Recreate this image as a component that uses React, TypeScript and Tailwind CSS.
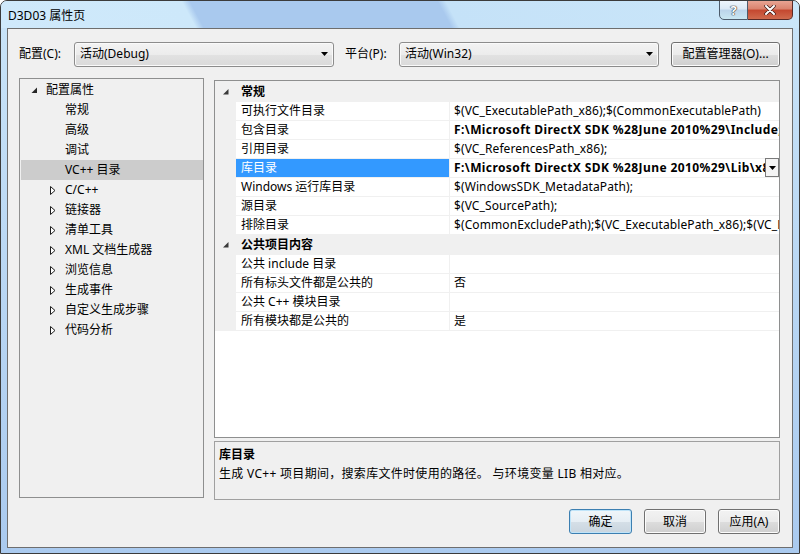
import React from "react";

type TreeItem = { label: string; root?: boolean; collapsed?: boolean; selected?: boolean };

const treeItems: TreeItem[] = [
  { label: "配置属性", root: true },
  { label: "常规" },
  { label: "高级" },
  { label: "调试" },
  { label: "VC++ 目录", selected: true },
  { label: "C/C++", collapsed: true },
  { label: "链接器", collapsed: true },
  { label: "清单工具", collapsed: true },
  { label: "XML 文档生成器", collapsed: true },
  { label: "浏览信息", collapsed: true },
  { label: "生成事件", collapsed: true },
  { label: "自定义生成步骤", collapsed: true },
  { label: "代码分析", collapsed: true },
];

type Prop = { name: string; value?: string; bold?: boolean; selected?: boolean };

const groups: { title: string; props: Prop[] }[] = [
  {
    title: "常规",
    props: [
      { name: "可执行文件目录", value: "$(VC_ExecutablePath_x86);$(CommonExecutablePath)" },
      {
        name: "包含目录",
        value: "F:\\Microsoft DirectX SDK %28June 2010%29\\Include;$(IncludePath)",
        bold: true,
      },
      { name: "引用目录", value: "$(VC_ReferencesPath_x86);" },
      {
        name: "库目录",
        value: "F:\\Microsoft DirectX SDK %28June 2010%29\\Lib\\x86;$(LibraryPath)",
        bold: true,
        selected: true,
      },
      { name: "Windows 运行库目录", value: "$(WindowsSDK_MetadataPath);" },
      { name: "源目录", value: "$(VC_SourcePath);" },
      { name: "排除目录", value: "$(CommonExcludePath);$(VC_ExecutablePath_x86);$(VC_LibraryPath_x86)" },
    ],
  },
  {
    title: "公共项目内容",
    props: [
      { name: "公共 include 目录" },
      { name: "所有标头文件都是公共的", value: "否" },
      { name: "公共 C++ 模块目录" },
      { name: "所有模块都是公共的", value: "是" },
    ],
  },
];

const ExpandedGlyph = () => (
  <svg width="7" height="7" viewBox="0 0 7 7">
    <path d="M6 0.5 L6 6 L0.5 6 Z" fill="#262626" />
  </svg>
);

const CollapsedGlyph = () => (
  <svg width="6" height="9" viewBox="0 0 6 9">
    <path d="M0.5 0.5 L5 4.5 L0.5 8.5 Z" fill="#fff" stroke="#1e1e1e" strokeWidth="1" />
  </svg>
);

const DownArrow = () => (
  <svg width="7" height="4" viewBox="0 0 7 4">
    <path d="M0 0 H7 L3.5 4 Z" fill="#000" />
  </svg>
);

const Combo = ({ value }: { value: string }) => (
  <div className="w-[260px] h-[25px] flex items-center rounded-[3px] border border-[#8c8c8c] bg-[linear-gradient(#f3f3f3_0%,#ececec_50%,#e2e2e2_51%,#dadada_100%)] shadow-[inset_0_0_0_1px_#fafafa] pl-[5px] pr-[5px]">
    <span className="flex-1">{value}</span>
    <DownArrow />
  </div>
);

const Button = ({ label, primary, w }: { label: string; primary?: boolean; w: string }) => (
  <div
    className={
      primary
        ? `${w} h-[25px] flex items-center justify-center rounded-[3px] border border-[#3c7fb1] bg-[linear-gradient(#f0f6fa_0%,#e6eef4_50%,#d5dfe7_51%,#c9d5df_100%)] shadow-[inset_0_0_0_1px_#bfe4f9]`
        : `${w} h-[25px] flex items-center justify-center rounded-[3px] border border-[#707070] bg-[linear-gradient(#f2f2f2_0%,#ebebeb_50%,#dddddd_51%,#cfcfcf_100%)] shadow-[inset_0_0_0_1px_#fcfcfc]`
    }
  >
    {label}
  </div>
);

const PropRow = ({ p }: { p: Prop }) => (
  <div className="flex h-[19px] border-b border-[#f0f0f0]">
    <div className="w-[21px] bg-[#f0f0f0]" />
    <div
      className={
        p.selected
          ? "w-[214px] flex items-center pl-[5px] bg-[#3399ff] text-white border-r border-[#f0f0f0]"
          : "w-[214px] flex items-center pl-[5px] bg-white border-r border-[#f0f0f0]"
      }
    >
      {p.name}
    </div>
    <div className="flex-1 min-w-0 flex items-center bg-white relative">
      <span
        className={
          p.bold
            ? "pl-[4px] whitespace-nowrap overflow-hidden font-bold tracking-[0.4px]"
            : "pl-[4px] whitespace-nowrap overflow-hidden tracking-[0.1px]"
        }
      >
        {p.value}
      </span>
      {p.selected && (
        <div className="absolute right-0 top-[-1px] w-[14px] h-[19px] border border-[#7a7a7a] bg-[#f4f4f4] flex items-center justify-center">
          <DownArrow />
        </div>
      )}
    </div>
  </div>
);

export default function App() {
  return (
    <div className="w-[800px] h-[554px] flex flex-col border border-[#3b3b3b] rounded-t-[7px] overflow-hidden bg-[linear-gradient(#c9e4f8,#aacaef)] text-[12px] leading-none text-black font-['Noto_Sans','Noto_Sans_CJK_SC',sans-serif]">
      {/* title bar */}
      <div className="h-[27px] flex items-start bg-[linear-gradient(62deg,#cfe9fb_0%,#cde8fa_24%,#a9c9ee_25%,#a9c9ee_55.5%,#c5e2f8_56.5%,#cae6f9_100%)]">
        <span className="pl-[7px] pt-[9px]">D3D03 属性页</span>
        <div className="ml-auto mr-[6px] -mt-[1px] flex">
          <div className="w-[29px] h-[20px] border border-[#4d5b6b] rounded-bl-[5px] bg-[linear-gradient(#eef6fc_0%,#dbe9f5_45%,#bcd4ea_50%,#c9e7f2_100%)] flex items-center justify-center">
            <span className="text-white font-bold text-[13px] [text-shadow:0_0_1px_#333,0_0_1px_#333,0_0_1px_#333]">?</span>
          </div>
          <div className="w-[45px] h-[20px] border border-l-0 border-[#5a2a26] rounded-br-[5px] bg-[linear-gradient(#e8a493_0%,#d9826d_45%,#c4472f_50%,#d06a4d_100%)] flex items-center justify-center">
            <svg width="12" height="10" viewBox="0 0 12 10">
              <path d="M2 1 L10 9 M10 1 L2 9" stroke="#3a1a17" strokeWidth="3.4" strokeLinecap="round" />
              <path d="M2 1 L10 9 M10 1 L2 9" stroke="#fff" strokeWidth="2" strokeLinecap="round" />
            </svg>
          </div>
        </div>
      </div>

      {/* client area */}
      <div className="mx-[6px] h-[520px] border border-[#6e6e6e] bg-[#f0f0f0] flex flex-col pl-[11px] pr-[12px]">
        {/* configuration row */}
        <div className="mt-[12px] h-[26px] flex items-center">
          <span className="w-[55px]">配置(C):</span>
          <Combo value="活动(Debug)" />
          <span className="ml-[11px] w-[54px]">平台(P):</span>
          <Combo value="活动(Win32)" />
          <div className="ml-[12px]">
            <Button label="配置管理器(O)..." w="w-[109px]" />
          </div>
        </div>

        <div className="flex mt-[11px]">
          {/* category tree */}
          <div className="w-[186px] h-[420px] border border-[#8e8f8f] py-[1px] pl-[1px]">
            {treeItems.map((t) => (
              <div
                key={t.label}
                className={t.selected ? "h-[20px] flex items-center bg-[#cccccc]" : "h-[20px] flex items-center"}
              >
                {t.root ? (
                  <>
                    <span className="w-[10px] ml-[10px]">
                      <ExpandedGlyph />
                    </span>
                    <span className="ml-[5px]">{t.label}</span>
                  </>
                ) : (
                  <>
                    <span className="w-[15px] ml-[29px]">{t.collapsed && <CollapsedGlyph />}</span>
                    <span>{t.label}</span>
                  </>
                )}
              </div>
            ))}
          </div>

          {/* property grid + description */}
          <div className="ml-[10px] w-[566px] mt-[2px] flex flex-col">
            <div className="h-[358px] border border-[#8e8f8f] bg-white overflow-hidden">
              <div className="border-t border-[#f0f0f0]">
                {groups.map((g) => (
                  <div key={g.title}>
                    <div className="h-[20px] flex items-center bg-[#f0f0f0]">
                      <span className="w-[26px] pl-[8px]">
                        <svg width="6" height="6" viewBox="0 0 6 6">
                          <path d="M5.5 0 L5.5 5.5 L0 5.5 Z" fill="#3a3a3a" />
                        </svg>
                      </span>
                      <span className="font-bold">{g.title}</span>
                    </div>
                    {g.props.map((p) => (
                      <PropRow key={p.name} p={p} />
                    ))}
                  </div>
                ))}
              </div>
            </div>
            <div className="mt-[3px] h-[59px] border border-[#a0a0a0] px-[4px] pt-[7px] flex flex-col gap-[7px]">
              <span className="font-bold">库目录</span>
              <span className="tracking-[0.3px]">生成 VC++ 项目期间，搜索库文件时使用的路径。 与环境变量 LIB 相对应。</span>
            </div>
          </div>
        </div>

        {/* dialog buttons */}
        <div className="mt-[9px] flex justify-end gap-[12px]">
          <Button label="确定" primary w="w-[63px]" />
          <Button label="取消" w="w-[62px]" />
          <Button label="应用(A)" w="w-[62px]" />
        </div>
      </div>
    </div>
  );
}
